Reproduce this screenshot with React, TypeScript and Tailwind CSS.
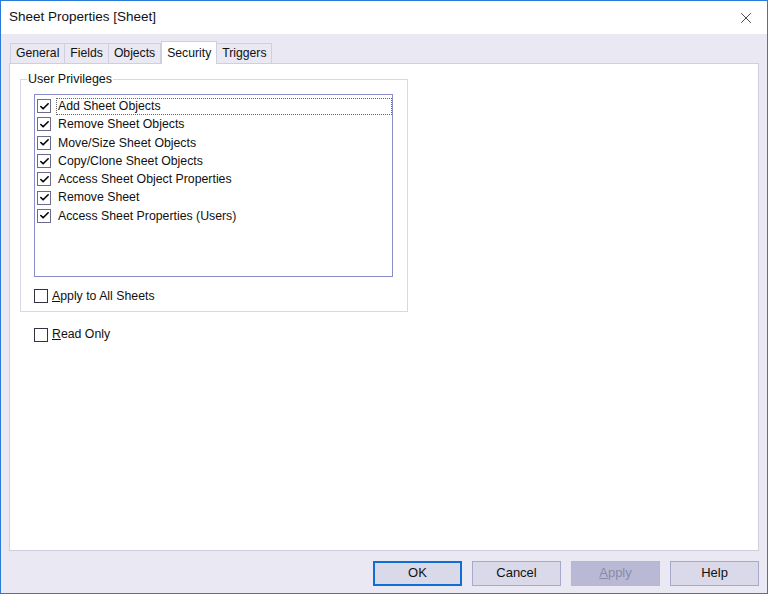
import { Check, X } from "lucide-react";

const privileges = [
  "Add Sheet Objects",
  "Remove Sheet Objects",
  "Move/Size Sheet Objects",
  "Copy/Clone Sheet Objects",
  "Access Sheet Object Properties",
  "Remove Sheet",
  "Access Sheet Properties (Users)",
];

const tabs = ["General", "Fields", "Objects", "Security", "Triggers"];

function Box({ checked, dark }: { checked?: boolean; dark?: boolean }) {
  return (
    <span
      className={`flex h-[14px] w-[14px] shrink-0 items-center justify-center border bg-white ${
        dark ? "border-[#333344]" : "border-[#6b6b8a]"
      }`}
    >
      {checked && <Check className="h-[11px] w-[11px] text-black" strokeWidth={3.5} />}
    </span>
  );
}

export default function App() {
  return (
    <div
      className="flex h-[594px] w-[768px] flex-col border border-[#2a7ad9] bg-[#e9e8f3] text-[12px] text-[#111]"
      style={{ fontFamily: "'Liberation Sans', Arial, sans-serif" }}
    >
      {/* Title bar */}
      <div className="flex h-[33px] shrink-0 items-center justify-between bg-white pl-[8px] pr-[12px]">
        <span className="text-[13.5px]">Sheet Properties [Sheet]</span>
        <X className="h-[18px] w-[18px] text-[#333]" strokeWidth={1.2} />
      </div>

      {/* Tabs */}
      <div className="flex h-[29px] items-end pl-[9px] pt-[8px]">
        {tabs.map((t) =>
          t === "Security" ? (
            <div
              key={t}
              className="relative z-10 -mb-px flex h-[23px] items-center border border-b-0 border-[#cfcfe0] bg-white px-[5px] text-[12.2px]"
            >
              {t}
            </div>
          ) : (
            <div
              key={t}
              className="-ml-px flex h-[20px] items-center border border-b-0 border-[#cfcfe0] bg-[#e9e8f3] px-[5px] text-[12.2px] first:ml-0"
            >
              {t}
            </div>
          )
        )}
      </div>

      {/* Tab panel */}
      <div className="mx-[8px] flex h-[488px] flex-col border border-[#cfcfe0] bg-white px-[10px] pt-[9px]">
        <fieldset className="w-[388px] border border-[#d7d7e6] px-[13px] pb-[6px] pt-[8px]">
          <legend className="-ml-[7px] px-[1px] text-[12.5px] leading-[13px]">User Privileges</legend>
          <div className="h-[183px] w-[359px] border border-[#8c8cc8] pt-[2px]">
            {privileges.map((p, i) => (
              <div key={p} className="flex h-[18.3px] items-center pl-[2px]">
                <Box checked />
                <span
                  className={`ml-[5px] flex h-[17px] items-center px-[1px] text-[12.3px] ${
                    i === 0 ? "w-[336px] border border-dotted border-[#666]" : "border border-transparent"
                  }`}
                >
                  {p}
                </span>
              </div>
            ))}
          </div>
          <label className="mt-[10px] flex items-center">
            <Box dark />
            <span className="ml-[4px] text-[12.3px]">
              <span className="underline">A</span>pply to All Sheets
            </span>
          </label>
        </fieldset>
        <label className="mt-[13px] flex items-center pl-[14px]">
          <Box dark />
          <span className="ml-[4px] text-[12.3px]">
            <span className="underline">R</span>ead Only
          </span>
        </label>
      </div>

      {/* Buttons */}
      <div className="flex flex-1 items-center justify-end gap-[10px] pr-[8px] pt-[2px]">
        <button className="h-[25px] w-[89px] border-2 border-[#0f6fd6] bg-[#d9d9ea] text-[13px]">OK</button>
        <button className="h-[25px] w-[89px] border border-[#a8a8cc] bg-[#d9d9ea] text-[13px]">Cancel</button>
        <button className="h-[25px] w-[89px] border border-[#b6b6d2] bg-[#b9b9d6] text-[13px] text-[#8a8aa8]">
          <span className="underline">A</span>pply
        </button>
        <button className="h-[25px] w-[89px] border border-[#a8a8cc] bg-[#d9d9ea] text-[13px]">Help</button>
      </div>
    </div>
  );
}
